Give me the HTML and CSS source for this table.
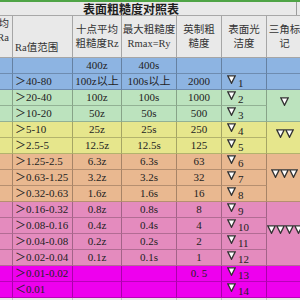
FILE: index.html
```html
<!DOCTYPE html>
<html lang="zh">
<head>
<meta charset="utf-8">
<title>表面粗糙度对照表</title>
<link rel="stylesheet" href="styles.css">
</head>
<body>
<svg width="0" height="0" class="defs">
  <defs>
    <symbol id="tri" viewBox="0 0 9 9"><polygon points="0.8,0.8 8.2,0.8 4.5,8.3"/></symbol>
  </defs>
</svg>
<div class="topbar"></div>
<div class="title-row">
  <div class="title">表面粗糙度对照表</div>
  <div class="title-rest"></div>
</div>
<div class="sheet">
  <div class="c h h0"><span>算术平均</span><span>偏差Ra</span></div>
  <div class="c h h1">Ra值范围</div>
  <div class="c h">十点平均<br>粗糙度Rz</div>
  <div class="c h">最大粗糙度<br>Rmax=Ry</div>
  <div class="c h">英制粗<br>糙度</div>
  <div class="c h">表面光<br>洁度</div>
  <div class="c h">三角标<br>记</div>

  <div class="c b"></div><div class="c b l"></div><div class="c b">400z</div><div class="c b">400s</div><div class="c b"></div><div class="c b g5"></div><div class="c b g6"></div>

  <div class="c b"></div><div class="c b l">＞40-80</div><div class="c b">100z以上</div><div class="c b">100s以上</div><div class="c b">2000</div><div class="c b g5"><svg class="tri"><use href="#tri"/></svg><span class="n">1</span></div><div class="c b g6"></div>

  <div class="c g"></div><div class="c g l">＞20-40</div><div class="c g">100z</div><div class="c g">100s</div><div class="c g">1000</div><div class="c g g5"><svg class="tri"><use href="#tri"/></svg><span class="n">2</span></div>
  <div class="c g g6 span2"><div class="tris"><svg class="tri"><use href="#tri"/></svg></div></div>
  <div class="c g"></div><div class="c g l">＞10-20</div><div class="c g">50z</div><div class="c g">50s</div><div class="c g">500</div><div class="c g g5"><svg class="tri"><use href="#tri"/></svg><span class="n">3</span></div>

  <div class="c y"></div><div class="c y l">＞5-10</div><div class="c y">25z</div><div class="c y">25s</div><div class="c y">250</div><div class="c y g5"><svg class="tri"><use href="#tri"/></svg><span class="n">4</span></div>
  <div class="c y g6 span2"><div class="tris"><svg class="tri"><use href="#tri"/></svg><svg class="tri"><use href="#tri"/></svg></div></div>
  <div class="c y"></div><div class="c y l">＞2.5-5</div><div class="c y">12.5z</div><div class="c y">12.5s</div><div class="c y">125</div><div class="c y g5"><svg class="tri"><use href="#tri"/></svg><span class="n">5</span></div>

  <div class="c o"></div><div class="c o l">＞1.25-2.5</div><div class="c o">6.3z</div><div class="c o">6.3s</div><div class="c o">63</div><div class="c o g5"><svg class="tri"><use href="#tri"/></svg><span class="n">6</span></div>
  <div class="c o g6 span3"><div class="tris"><svg class="tri"><use href="#tri"/></svg><svg class="tri"><use href="#tri"/></svg><svg class="tri"><use href="#tri"/></svg></div></div>
  <div class="c o"></div><div class="c o l">＞0.63-1.25</div><div class="c o">3.2z</div><div class="c o">3.2s</div><div class="c o">32</div><div class="c o g5"><svg class="tri"><use href="#tri"/></svg><span class="n">7</span></div>
  <div class="c o"></div><div class="c o l">＞0.32-0.63</div><div class="c o">1.6z</div><div class="c o">1.6s</div><div class="c o">16</div><div class="c o g5"><svg class="tri"><use href="#tri"/></svg><span class="n">8</span></div>

  <div class="c p"></div><div class="c p l">＞0.16-0.32</div><div class="c p">0.8z</div><div class="c p">0.8s</div><div class="c p">8</div><div class="c p g5"><svg class="tri"><use href="#tri"/></svg><span class="n">9</span></div>
  <div class="c p g6 span4"><div class="tris"><svg class="tri"><use href="#tri"/></svg><svg class="tri"><use href="#tri"/></svg><svg class="tri"><use href="#tri"/></svg><svg class="tri"><use href="#tri"/></svg></div></div>
  <div class="c p"></div><div class="c p l">＞0.08-0.16</div><div class="c p">0.4z</div><div class="c p">0.4s</div><div class="c p">4</div><div class="c p g5"><svg class="tri"><use href="#tri"/></svg><span class="n">10</span></div>
  <div class="c p"></div><div class="c p l">＞0.04-0.08</div><div class="c p">0.2z</div><div class="c p">0.2s</div><div class="c p">2</div><div class="c p g5"><svg class="tri"><use href="#tri"/></svg><span class="n">11</span></div>
  <div class="c p"></div><div class="c p l">＞0.02-0.04</div><div class="c p">0.1z</div><div class="c p">0.1s</div><div class="c p">1</div><div class="c p g5"><svg class="tri"><use href="#tri"/></svg><span class="n">12</span></div>

  <div class="c m"></div><div class="c m l">＞0.01-0.02</div><div class="c m"></div><div class="c m"></div><div class="c m">0. 5</div><div class="c m g5"><svg class="tri"><use href="#tri"/></svg><span class="n">13</span></div><div class="c m g6"></div>
  <div class="c m"></div><div class="c m l">＜0.01</div><div class="c m"></div><div class="c m"></div><div class="c m"></div><div class="c m g5"><svg class="tri"><use href="#tri"/></svg><span class="n">14</span></div><div class="c m g6"></div>

  <div class="c blank"></div><div class="c blank"></div><div class="c blank"></div><div class="c blank"></div><div class="c blank"></div><div class="c blank"></div><div class="c blank"></div>
</div>
</body>
</html>
```
FILE: styles.css
```css
html, body {
  margin: 0;
  padding: 0;
}
body {
  width: 300px;
  height: 300px;
  overflow: hidden;
  background: #e9e9e9;
  font-family: "Liberation Serif", "Noto Sans CJK SC", serif;
  color: #222;
}
.defs {
  position: absolute;
}
.topbar {
  height: 2px;
  background: #4fa446;
}
.title-row {
  display: flex;
  height: 14px;
  width: 303px;
  box-sizing: border-box;
  border-bottom: 1px solid #a8a8a8;
}
.title {
  width: 297px;
  box-sizing: border-box;
  border-right: 1px solid #9c9c9c;
  padding-left: 83px;
  font-family: "Noto Sans CJK SC", sans-serif;
  font-weight: bold;
  font-size: 12px;
  line-height: 13px;
  color: #1e1e1e;
  white-space: nowrap;
}
.title-rest {
  flex: 1;
}
.sheet {
  display: grid;
  grid-template-columns: 13px 60px 49px 55px 45px 45px 36px;
  grid-template-rows: 42px;
  grid-auto-rows: 16px;
  width: 303px;
}
.c {
  box-sizing: border-box;
  border-right: 1px solid rgba(0, 0, 0, 0.28);
  border-bottom: 1px solid rgba(0, 0, 0, 0.22);
  font-size: 11px;
  line-height: 15px;
  display: flex;
  align-items: center;
  justify-content: center;
  white-space: nowrap;
}
.h {
  background: #e9e9e9;
  border-right-color: #a6a6a6;
  border-bottom-color: #a6a6a6;
  font-size: 10.5px;
  line-height: 14px;
  text-align: center;
  color: #333;
}
.h0 {
  flex-direction: column;
  align-items: flex-end;
  justify-content: flex-start;
  padding: 1px 3px 0 0;
}
.h1 {
  align-items: flex-end;
  justify-content: flex-start;
  padding: 0 0 2px 2px;
}
.l {
  justify-content: flex-start;
  padding-left: 2px;
}
.b { background: #8db4e2; }
.g { background: #bce3be; }
.y { background: #e6e68c; }
.o { background: #e9b890; }
.p { background: #e48bbe; }
.m { background: #ee00ee; }
.blank {
  background: #e9e9e9;
  border-right-color: #c4c4c4;
  border-bottom: none;
}
.tri {
  width: 9px;
  height: 9px;
  fill: #fff;
  stroke: #333;
  stroke-width: 1.3;
  flex: none;
}
.g5 {
  justify-content: flex-start;
  align-items: flex-start;
  padding-left: 5px;
}
.g5 .tri {
  margin-top: 1px;
}
.g5 .n {
  margin-left: 2px;
  margin-top: 3px;
  line-height: 13px;
}
.g6 {
  justify-content: safe center;
}
.tris {
  display: flex;
  margin-bottom: 9px;
}
.span2 { grid-row: span 2; }
.span3 { grid-row: span 3; }
.span4 { grid-row: span 4; }
```
